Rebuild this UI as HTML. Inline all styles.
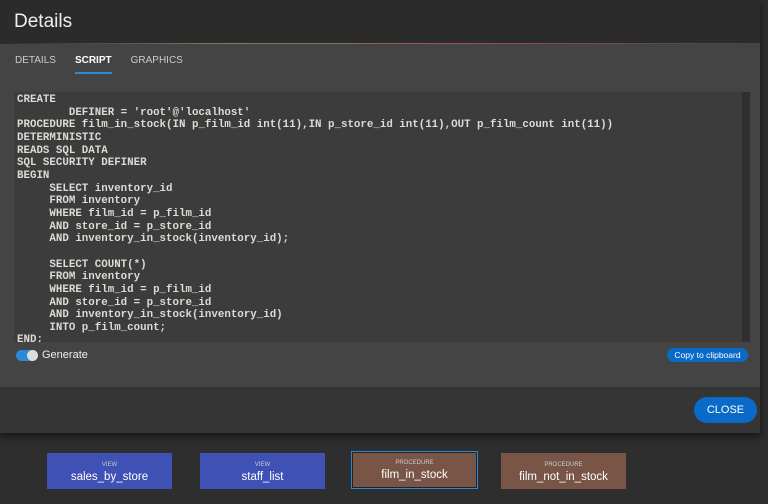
<!DOCTYPE html><html><head><style>
body{margin:0;width:768px;height:504px;background:#2e2e2e;font-family:"Liberation Sans",sans-serif;overflow:hidden;position:relative}
.dlg{position:absolute;left:0;top:0;width:760px;height:433px;background:#444;box-shadow:0 3px 8px rgba(0,0,0,.6)}
.hdr{height:43px;background:#2b2b2b;color:#eee;font-size:19px;line-height:43px;padding-left:14px;border-bottom:1px solid;border-image:linear-gradient(90deg,#2b2b2b,#6a8a5a 30%,#a05050 60%,#444) 1}
.tabs{position:absolute;top:55px;left:15px;font-size:10px;color:#ccc}
.tabs span{margin-right:19px}
.tabs .a{color:#fff;font-weight:bold;border-bottom:2px solid #2a8ad8;padding-bottom:6px}
.code{position:absolute;left:14px;top:92px;width:736px;height:250px;background:#3c3c3c;overflow:hidden}
pre{margin:0;padding:2px 0 0 3px;font-family:"Liberation Mono",monospace;font-size:10.8px;line-height:12.65px;color:#dcdcd4;font-weight:bold}
.sb{position:absolute;right:0;top:0;width:8px;height:250px;background:#2f2f2f}
.gen{position:absolute;left:16px;top:349px;font-size:11px;color:#eee;display:flex;align-items:center}
.tg{width:22px;height:11px;border-radius:6px;background:#2a8ad8;position:relative;margin-right:4px}
.tg:after{content:"";position:absolute;right:0;top:0;width:11px;height:11px;border-radius:50%;background:#ddd}
.copy{position:absolute;left:667px;top:348px;width:81px;height:14px;border-radius:7px;background:#0a6ac8;color:#fff;font-size:8.5px;text-align:center;line-height:14px}
.ftr{position:absolute;left:0;top:387px;width:760px;height:46px;background:#353535}
.close{position:absolute;left:694px;top:397px;width:63px;height:26px;border-radius:13px;background:#0a6ac8;color:#fff;font-size:11px;text-align:center;line-height:26px}
.n{position:absolute;top:453px;width:125px;height:36px;color:#fff;text-align:center;font-size:11.5px}
.n small{display:block;font-size:6px;color:#ccc;margin-top:9px;margin-bottom:3px}
.v{background:#3f51b5}.p{background:#795548}
</style></head><body>
<div class="dlg">
<div class="hdr">Details</div>
<div class="tabs"><span>DETAILS</span><span class="a">SCRIPT</span><span>GRAPHICS</span></div>
<div class="code"><pre>CREATE
        DEFINER = 'root'@'localhost'
PROCEDURE film_in_stock(IN p_film_id int(11),IN p_store_id int(11),OUT p_film_count int(11))
DETERMINISTIC
READS SQL DATA
SQL SECURITY DEFINER
BEGIN
     SELECT inventory_id
     FROM inventory
     WHERE film_id = p_film_id
     AND store_id = p_store_id
     AND inventory_in_stock(inventory_id);

     SELECT COUNT(*)
     FROM inventory
     WHERE film_id = p_film_id
     AND store_id = p_store_id
     AND inventory_in_stock(inventory_id)
     INTO p_film_count;
END;</pre><div class="sb"></div></div>
<div class="gen"><div class="tg"></div>Generate</div>
<div class="copy">Copy to clipboard</div>
<div class="ftr"></div>
<div class="close">CLOSE</div>
</div>
<div class="n v" style="left:47px"><small>VIEW</small>sales_by_store</div>
<div class="n v" style="left:200px"><small>VIEW</small>staff_list</div>
<div class="n p" style="left:351px;top:451px;border:1px solid #2a8ad8;box-shadow:0 0 0 1px #222 inset"><small style="margin-top:8px">PROCEDURE</small>film_in_stock</div>
<div class="n p" style="left:501px"><small>PROCEDURE</small>film_not_in_stock</div>
</body></html>
